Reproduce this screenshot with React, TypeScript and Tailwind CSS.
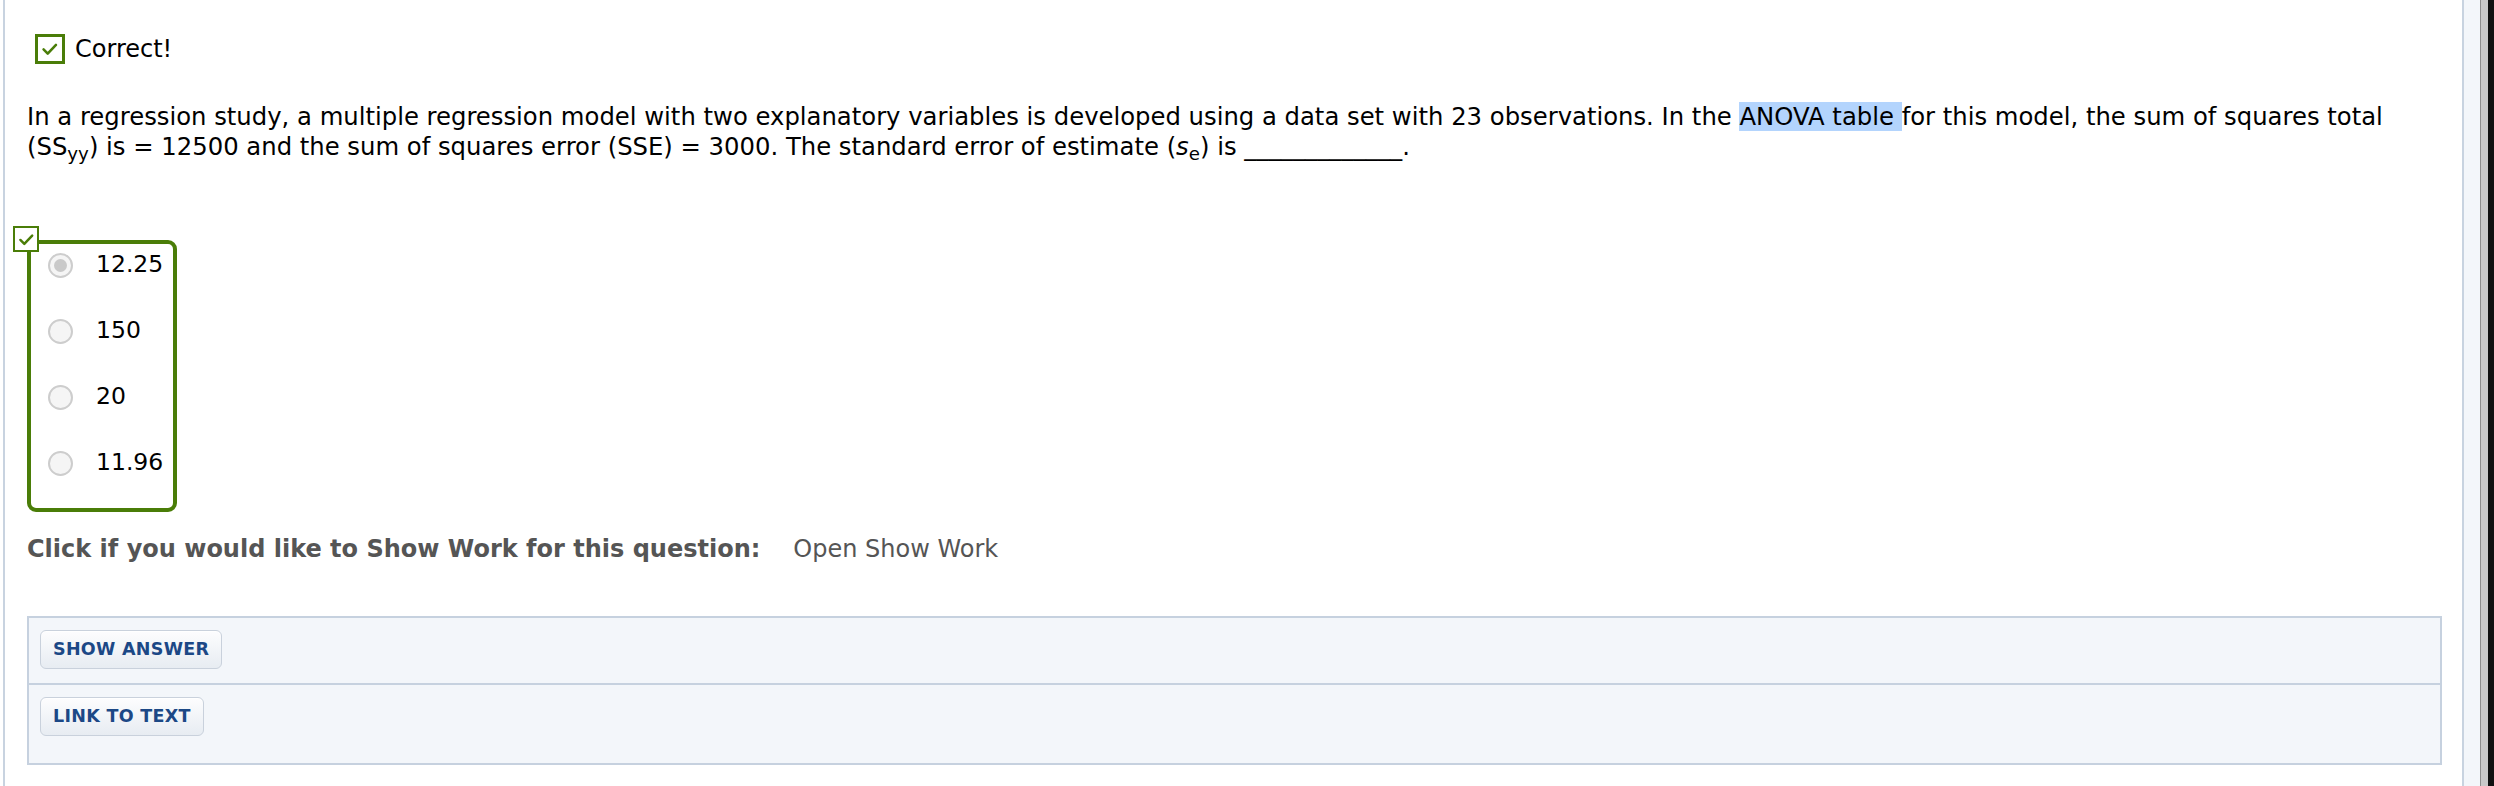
import React from 'react';

const green = '#4a7d08';

function Check({ size }: { size: number }) {
  return (
    <svg width={size} height={size} viewBox="0 0 24 24" fill="none">
      <path d="M5 12.5l4.5 4.5 9-9.5" stroke={green} strokeWidth="2.8" strokeLinecap="round" strokeLinejoin="round" />
    </svg>
  );
}

function Radio({ checked }: { checked?: boolean }) {
  return (
    <span className="flex h-[25px] w-[25px] shrink-0 items-center justify-center rounded-full border-2 border-[#cdcdcd] bg-[#f5f5f5]">
      {checked && <span className="h-[13px] w-[13px] rounded-full bg-[#c9c9c9]" />}
    </span>
  );
}

const options = [
  { label: '12.25', checked: true },
  { label: '150' },
  { label: '20' },
  { label: '11.96' },
];

function ActionButton({ children }: { children: React.ReactNode }) {
  return (
    <button
      type="button"
      className="h-[39px] rounded-[6px] border border-[#c9d1dc] bg-gradient-to-b from-[#fdfdfe] to-[#e7ecf2] px-[12px] text-[17.5px] font-bold tracking-[0.3px] text-[#1c4886] shadow-[inset_0_1px_0_#ffffff]"
    >
      {children}
    </button>
  );
}

export default function App() {
  return (
    <div
      className="flex h-[786px] w-[2494px] overflow-hidden bg-white text-black"
      style={{ fontFamily: 'Verdana, "DejaVu Sans", sans-serif' }}
    >
      <div className="ml-[3px] w-[2px] shrink-0 bg-[#c8d3e0]" />

      <main className="min-w-0 flex-1 pl-[22px] pt-[34px]">
        {/* result */}
        <div className="flex items-center gap-[10px] pl-[8px]">
          <span className="flex h-[30px] w-[30px] items-center justify-center border-[3px] border-[#4a7d08] bg-white">
            <Check size={22} />
          </span>
          <span className="text-[24px] leading-[30px]">Correct!</span>
        </div>

        {/* question */}
        <p className="mt-[38px] text-[24.3px] leading-[30px]">
          In a regression study, a multiple regression model with two explanatory variables is developed using a data set
          with 23 observations. In the <span className="bg-[#b3d4fd]">ANOVA table </span>for this model, the sum of squares
          total
          <br />
          (SS<sub>yy</sub>) is = 12500 and the sum of squares error (SSE) = 3000. The standard error of estimate (
          <i>s</i>
          <sub>e</sub>) is _____________.
        </p>

        {/* answer choices */}
        <div className="relative mt-[78px] w-[150px]">
          <span className="absolute left-[-14px] top-[-14px] z-10 flex h-[26px] w-[26px] items-center justify-center border-2 border-[#4a7d08] bg-white">
            <Check size={21} />
          </span>
          <div className="flex h-[272px] flex-col gap-[24px] rounded-[9px] border-4 border-[#4a7d08] bg-white">
            {options.map((o) => (
              <label key={o.label} className="flex h-[42px] items-center gap-[23px] pl-[17px] text-[23.5px]">
                <Radio checked={o.checked} />
                <span>{o.label}</span>
              </label>
            ))}
          </div>
        </div>

        {/* show work */}
        <div className="mt-[23px] flex items-center gap-[33px] text-[24px] leading-[28px] text-[#555555]">
          <span className="font-bold">Click if you would like to Show Work for this question:</span>
          <span>Open Show Work</span>
        </div>

        {/* tools */}
        <div className="mt-[53px] w-[2415px] border-2 border-[#c6d1df] bg-[#f3f6fa]">
          <div className="border-b-2 border-[#c6d1df] pb-[14px] pl-[11px] pt-[12px]">
            <ActionButton>SHOW ANSWER</ActionButton>
          </div>
          <div className="pb-[27px] pl-[11px] pt-[12px]">
            <ActionButton>LINK TO TEXT</ActionButton>
          </div>
        </div>
      </main>

      <div className="w-[2px] shrink-0 bg-[#c8d3e0]" />
      <div className="w-[16px] shrink-0 bg-[#f3f6fa]" />
      <div className="w-[1px] shrink-0 bg-[#8d8d8d]" />
      <div className="w-[7px] shrink-0 bg-[#c9c9c9]" />
      <div className="w-[6px] shrink-0 bg-[#111111]" />
    </div>
  );
}
